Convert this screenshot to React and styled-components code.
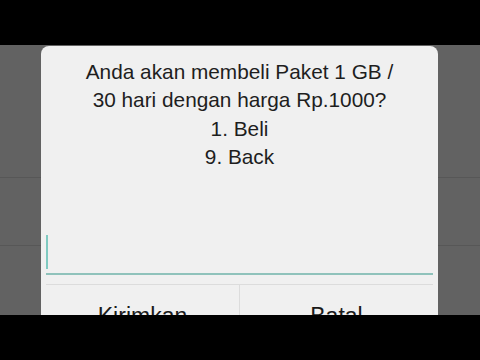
import React from 'react'
import styled, { createGlobalStyle } from 'styled-components'

const Global = createGlobalStyle`
  html, body { margin: 0; padding: 0; background: #000; }
  body { font-family: "Liberation Sans", Roboto, sans-serif; }
`

const Screen = styled.div`
  width: 480px;
  height: 360px;
  display: flex;
  flex-direction: column;
  background: #000;
  overflow: hidden;
`

const Letterbox = styled.div`
  height: ${props => props.h}px;
  flex-shrink: 0;
  background: #000;
`

const Stage = styled.div`
  position: relative;
  flex: 1;
  background: #626262;
  display: flex;
  flex-direction: column;
  overflow: hidden;
`

const BgRow = styled.div`
  height: ${props => props.h}px;
  border-bottom: 1px solid #575757;
  flex-shrink: 0;
`

const Dialog = styled.div`
  position: absolute;
  top: 1px;
  left: 41px;
  width: 397px;
  height: 300px;
  background: #f0f0f0;
  border-radius: 8px 8px 0 0;
  display: flex;
  flex-direction: column;
`

const Message = styled.div`
  padding-top: 12px;
  text-align: center;
  font-size: 20.8px;
  line-height: 28.3px;
  color: #1e1e1e;
`

const Field = styled.div`
  margin: 63px 5px 0;
  height: 39px;
  border-bottom: 2px solid #8fc2bb;
  display: flex;
  align-items: flex-start;
`

const Caret = styled.span`
  margin-top: 1px;
  width: 2px;
  height: 34px;
  background: #7fcac1;
`

const Buttons = styled.div`
  margin: 9px 5px 0;
  border-top: 1px solid #dcdcdc;
  display: grid;
  grid-template-columns: 193px 1fr;
`

const Button = styled.div`
  height: 60px;
  padding-top: 18px;
  box-sizing: border-box;
  text-align: center;
  font-size: 23px;
  color: #1a1a1a;
  border-left: ${props => (props.split ? '1px solid #dcdcdc' : 'none')};
`

export default function App() {
  return (
    <Screen>
      <Global />
      <Letterbox h={45} />
      <Stage>
        <BgRow h={132} />
        <BgRow h={67} />
        <Dialog>
          <Message>
            Anda akan membeli Paket 1 GB /<br />
            30 hari dengan harga Rp.1000?<br />
            1. Beli<br />
            9. Back
          </Message>
          <Field>
            <Caret />
          </Field>
          <Buttons>
            <Button>Kirimkan</Button>
            <Button split>Batal</Button>
          </Buttons>
        </Dialog>
      </Stage>
      <Letterbox h={45} />
    </Screen>
  )
}
